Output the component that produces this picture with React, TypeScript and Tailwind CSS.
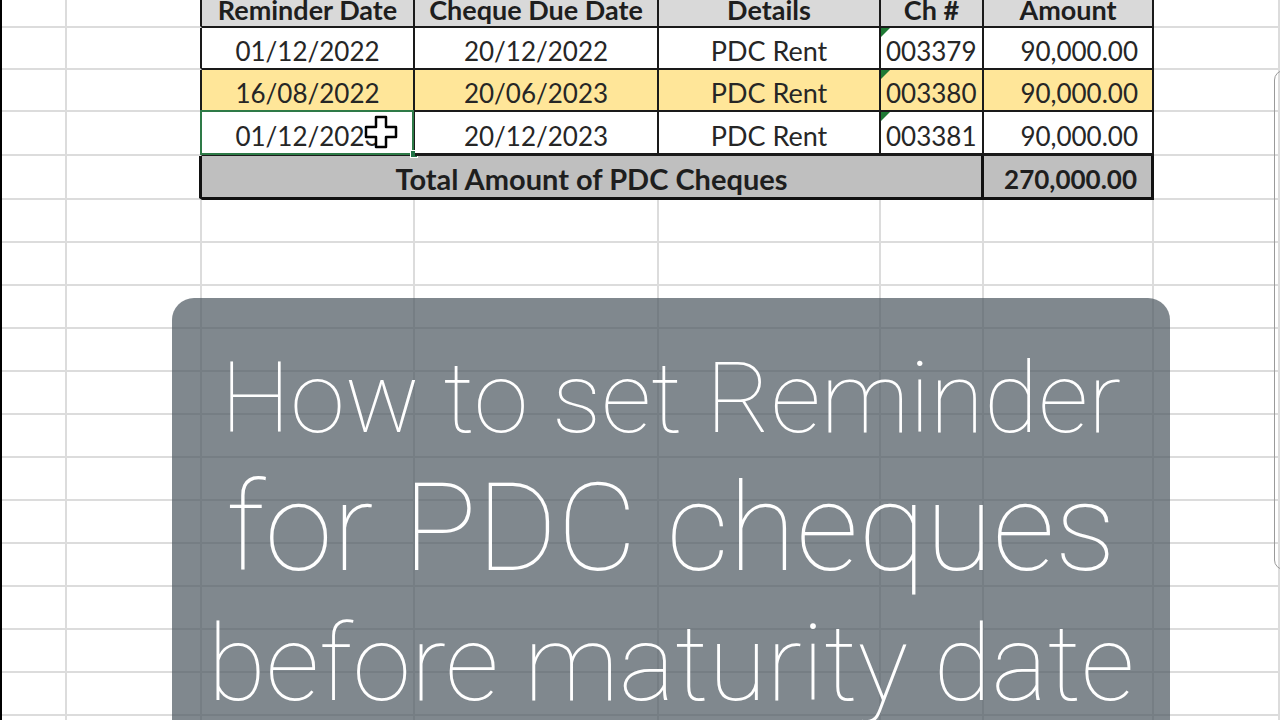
import React from 'react';

const COLS = [65, 135, 213, 244, 222, 103, 170, 126];
const GRID = 'border-[#dcdcdc]';

type Row = {
  reminder: string;
  due: string;
  details: string;
  cheque: string;
  amount: string;
  tint?: boolean;
};

const rows: Row[] = [
  { reminder: '01/12/2022', due: '20/12/2022', details: 'PDC Rent', cheque: '003379', amount: '90,000.00' },
  { reminder: '16/08/2022', due: '20/06/2023', details: 'PDC Rent', cheque: '003380', amount: '90,000.00', tint: true },
  { reminder: '01/12/2023', due: '20/12/2023', details: 'PDC Rent', cheque: '003381', amount: '90,000.00' },
];

const cellFont = { fontFamily: 'Lato, "Open Sans", sans-serif' };

function EmptyCell({ w, extra = '' }: { w: number; extra?: string }) {
  return <div className={`h-full shrink-0 box-border border-r-2 border-b-2 ${GRID} ${extra}`} style={{ width: w }} />;
}

// green "number stored as text" marker
function ErrorMark() {
  return (
    <svg className="absolute left-0 top-0" width="9" height="9" viewBox="0 0 9 9">
      <polygon points="0,0 9,0 0,9" fill="#1f7a35" />
    </svg>
  );
}

function CrossCursor() {
  return (
    <svg className="absolute left-[363px] top-[115px]" width="36" height="34" viewBox="0 0 36 34">
      <path
        d="M13 2 H23 V12 H33 V22 H23 V32 H13 V22 H3 V12 H13 Z"
        fill="#fff"
        stroke="#000"
        strokeWidth="2.5"
        strokeLinejoin="round"
      />
    </svg>
  );
}

function HeaderRow() {
  const labels = ['Reminder Date', 'Cheque Due Date', 'Details', 'Ch #', 'Amount'];
  return (
    <div className="flex h-[28px] shrink-0">
      <EmptyCell w={COLS[0]} />
      <EmptyCell w={COLS[1]} extra="!border-r-[#1a1a1a]" />
      {labels.map((l, i) => (
        <div
          key={l}
          className="h-full shrink-0 box-border border-r-2 border-b-2 border-[#1a1a1a] bg-[#d9d9d9] flex justify-center overflow-hidden text-[27px] leading-[19px] font-bold text-[#1e1e1e] whitespace-nowrap"
          style={{ width: COLS[i + 2], ...cellFont }}
        >
          {l}
        </div>
      ))}
      <EmptyCell w={COLS[7]} />
    </div>
  );
}

function DataRow({ row, idx }: { row: Row; idx: number }) {
  const last = idx === rows.length - 1;
  const bb = last ? 'border-b-[3px]' : 'border-b-2';
  const bg = row.tint ? 'bg-[#ffe699]' : 'bg-white';
  const base = `relative h-full shrink-0 box-border border-r-2 ${bb} border-[#1a1a1a] ${bg} flex items-center pt-[6px] text-[26px] leading-[26px] text-[#262626] whitespace-nowrap`;
  return (
    <div className={`flex shrink-0 ${last ? 'h-[44px]' : 'h-[42px]'}`}>
      <EmptyCell w={COLS[0]} />
      <EmptyCell w={COLS[1]} extra="!border-r-[#1a1a1a]" />
      <div className={`${base} justify-center`} style={{ width: COLS[2], ...cellFont }}>
        {row.reminder}
        {last && (
          <>
            <div className="absolute -left-[2px] -top-[2px] -right-[1px] -bottom-[2px] border-2 border-[#2e7a47]" />
            <div className="absolute -right-[5px] -bottom-[5px] w-[8px] h-[8px] bg-[#217346] border border-white" />
          </>
        )}
      </div>
      <div className={`${base} justify-center`} style={{ width: COLS[3], ...cellFont }}>
        {row.due}
      </div>
      <div className={`${base} justify-center text-[27px]`} style={{ width: COLS[4], ...cellFont }}>
        {row.details}
      </div>
      <div className={`${base} justify-start pl-[5px]`} style={{ width: COLS[5], ...cellFont }}>
        <ErrorMark />
        {row.cheque}
      </div>
      <div className={`${base} justify-end pr-[14px]`} style={{ width: COLS[6], ...cellFont }}>
        {row.amount}
      </div>
      <EmptyCell w={COLS[7]} />
    </div>
  );
}

function TotalRow() {
  const base =
    'h-full shrink-0 box-border border-r-[3px] border-b-[3px] border-[#111] bg-[#bfbfbf] flex items-center pt-[4px] leading-[26px] font-bold text-[#1e1e1e] whitespace-nowrap';
  return (
    <div className="flex h-[44px] shrink-0">
      <EmptyCell w={COLS[0]} />
      <EmptyCell w={COLS[1]} extra="!border-r-[3px] !border-r-[#111]" />
      <div
        className={`${base} justify-center text-[29px]`}
        style={{ width: COLS[2] + COLS[3] + COLS[4] + COLS[5], ...cellFont }}
      >
        Total Amount of PDC Cheques
      </div>
      <div className={`${base} justify-end pr-[14px] text-[26px]`} style={{ width: COLS[6], ...cellFont }}>
        270,000.00
      </div>
      <EmptyCell w={COLS[7]} />
    </div>
  );
}

function BlankRow() {
  return (
    <div className="flex h-[43px] shrink-0">
      {COLS.map((w, i) => (
        <EmptyCell key={i} w={w} />
      ))}
    </div>
  );
}

export default function App() {
  return (
    <div className="relative w-[1280px] h-[720px] overflow-hidden bg-white">
      {/* Sheet */}
      <div className="flex flex-col border-l-2 border-black h-full">
        <HeaderRow />
        {rows.map((r, i) => (
          <DataRow key={i} row={r} idx={i} />
        ))}
        <TotalRow />
        {Array.from({ length: 13 }).map((_, i) => (
          <BlankRow key={i} />
        ))}
      </div>

      <CrossCursor />

      {/* scrollbar track edge */}
      <div className="absolute left-[1274px] top-[70px] w-[20px] h-[500px] rounded-l-[10px] border border-[#9a9a9a]" />

      {/* Title card */}
      <div className="absolute left-[172px] top-[298px] w-[998px] h-[460px] rounded-[22px] bg-[rgba(79,90,98,0.72)] pt-[33px]">
        <div className="text-center text-white font-thin whitespace-nowrap" style={{ fontFamily: 'Roboto, Inter, sans-serif' }}>
          <div className="text-[99px] leading-[134px]">How to set Reminder</div>
          <div className="text-[123px] leading-[126px]">for PDC cheques</div>
          <div className="text-[106px] leading-[146px]">before maturity date</div>
        </div>
      </div>
    </div>
  );
}
